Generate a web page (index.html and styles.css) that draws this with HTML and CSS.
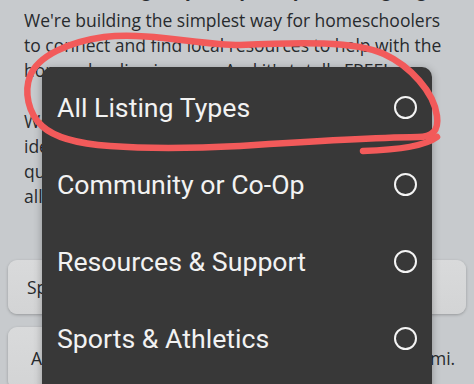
FILE: index.html
```html
<!DOCTYPE html>
<html>
<head>
<meta charset="utf-8">
<link rel="stylesheet" href="styles.css">
</head>
<body>
<div class="page">
  <div class="intro">
    <div class="lead">Homeschooling is a journey, and you're not going it alone.</div>
    <p class="para">We're building the simplest way for homeschoolers<br>to connect and find local resources to help with the<br>homeschooling journey. And it's totally FREE!</p>
    <p class="para">We'd love to hear from you. If you have any<br>ideas for the app or a listing to add, or any<br>questions at all, please reach out. We read<br>all of your messages.</p>
  </div>
  <div class="controls">
    <div class="card card-wide"><span class="card-label">Sports &amp; Athletics</span></div>
    <div class="row">
      <div class="card card-dist"><span class="card-label">Any distance</span></div>
      <span class="unit">mi.</span>
    </div>
  </div>
</div>

<div class="menu">
  <div class="item"><span class="item-label">All Listing Types</span><span class="radio"></span></div>
  <div class="item"><span class="item-label">Community or Co-Op</span><span class="radio"></span></div>
  <div class="item"><span class="item-label">Resources &amp; Support</span><span class="radio"></span></div>
  <div class="item"><span class="item-label">Sports &amp; Athletics</span><span class="radio"></span></div>
</div>

<svg class="scribble" width="474" height="384" viewBox="0 0 474 384">
  <path d="M240 45 C300 42 355 41 384 54 C410 66 434 92 437 116 C439 131 432 137 418 137 C360 138 300 142 240 146 C200 148 150 149 110 146 C80 144 55 138 42 126 C28 113 24 92 30 76 C38 56 68 42 104 37 C150 32 200 45 240 45 Z" />
  <path d="M437 137 C425 146 395 150 363 151" />
</svg>
</body>
</html>
```

FILE: styles.css
```css
html, body {
  margin: 0;
  padding: 0;
}
body {
  width: 474px;
  height: 384px;
  overflow: hidden;
  background: #c7cacd;
  position: relative;
}
.page {
  padding: 0 8px;
}
.intro {
  margin-top: -22px;
  padding: 0 16px;
  font-family: "Open Sans", sans-serif;
  font-size: 17.5px;
  line-height: 25px;
  color: #272a2d;
}
.lead {
  white-space: nowrap;
  margin-bottom: 5px;
}
.para {
  margin: 0 0 26px 0;
  white-space: nowrap;
}
.controls {
  display: flex;
  flex-direction: column;
  gap: 13px;
  margin-top: 51px;
}
.card {
  background: linear-gradient(#d9dadb, #d3d4d5);
  border-radius: 9px;
  box-shadow: 0 1px 3px rgba(0,0,0,0.25);
  display: flex;
  align-items: center;
  font-family: "Open Sans", sans-serif;
  font-size: 17.5px;
  color: #272a2d;
}
.card-wide {
  height: 54px;
  padding-left: 19px;
}
.row {
  display: flex;
  align-items: center;
  gap: 10px;
}
.card-dist {
  height: 62px;
  width: 412px;
  padding-left: 23px;
  box-sizing: border-box;
}
.unit {
  font-family: "Open Sans", sans-serif;
  font-size: 17.5px;
  color: #272a2d;
}
.menu {
  position: absolute;
  left: 42px;
  top: 67px;
  width: 390px;
  height: 340px;
  background: #383838;
  border-radius: 10px;
  box-shadow: 0 2px 8px rgba(0,0,0,0.3);
  padding-top: 2px;
  box-sizing: border-box;
}
.item {
  height: 77px;
  display: flex;
  align-items: center;
  justify-content: space-between;
  padding: 0 15px 0 15px;
}
.item-label {
  font-family: Roboto, sans-serif;
  font-size: 26.7px;
  color: #f2f2f2;
}
.radio {
  width: 19px;
  height: 19px;
  border: 2.2px solid #f4f4f4;
  border-radius: 50%;
}
.scribble {
  position: absolute;
  left: 0;
  top: 0;
  pointer-events: none;
}
.scribble path {
  fill: none;
  stroke: #f25a5a;
  stroke-width: 6.5;
  stroke-linecap: round;
  stroke-linejoin: round;
}
```
